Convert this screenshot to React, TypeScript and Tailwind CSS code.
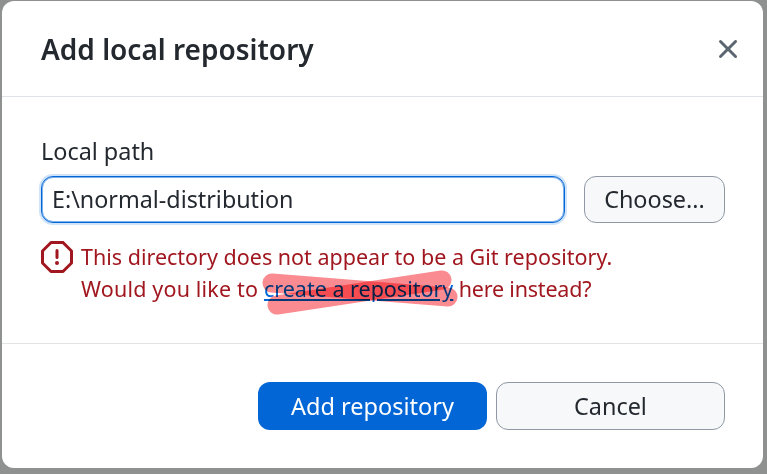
export default function App() {
  return (
    <div className="h-[474px] w-[767px] overflow-hidden bg-[#8f9191] pl-[2px] pt-[1px]" style={{ fontFamily: '"Noto Sans", sans-serif' }}>
      <div className="flex h-[467px] w-[761px] flex-col rounded-[12px] bg-white text-[#24292f]">
        <header className="flex h-[96px] shrink-0 items-center justify-between border-b border-[#dfe2e6] pl-[39px] pr-[19px]">
          <h1 className="text-[28px] font-semibold leading-none">Add local repository</h1>
          <svg width="32" height="32" viewBox="0 0 16 16" fill="#5c6670" aria-hidden="true">
            <path d="M3.72 3.72a.75.75 0 0 1 1.06 0L8 6.94l3.22-3.22a.749.749 0 0 1 1.275.326.749.749 0 0 1-.215.734L9.06 8l3.22 3.22a.749.749 0 0 1-.326 1.275.749.749 0 0 1-.734-.215L8 9.06l-3.22 3.22a.751.751 0 0 1-1.042-.018.751.751 0 0 1-.018-1.042L6.94 8 3.72 4.78a.75.75 0 0 1 0-1.06Z" />
          </svg>
        </header>
        <section className="flex h-[247px] shrink-0 flex-col border-b border-[#e1e3e5] pl-[39px] pr-[38px] pt-[37px]">
          <label className="text-[23.4px] leading-[34px]">Local path</label>
          <div className="mt-[8px] flex gap-[19px]">
            <div className="flex h-[47px] w-[524px] items-center rounded-[12px] border border-[#0366d6] bg-white pl-[10px] pb-[1px] text-[23.3px] shadow-[0_0_0_2px_#cfe3f9,inset_0_0_0_1px_#7fb2ea]">
              E:\normal-distribution
            </div>
            <button className="h-[47px] w-[141px] rounded-[12px] border border-[#8f98a3] bg-[#f6f8fa] text-[23.4px]">Choose...</button>
          </div>
          <div className="relative mt-[18px] flex gap-[8px] text-[21.5px] leading-[32px] text-[#a1171f]">
            <svg className="shrink-0" width="32" height="32" viewBox="0 0 16 16" fill="#a1171f" aria-hidden="true">
              <path d="M4.47.22A.749.749 0 0 1 5 0h6c.199 0 .389.079.53.22l4.25 4.25c.141.14.22.331.22.53v6a.749.749 0 0 1-.22.53l-4.25 4.25A.749.749 0 0 1 11 16H5a.749.749 0 0 1-.53-.22L.22 11.53A.749.749 0 0 1 0 11V5c0-.199.079-.389.22-.53Zm.84 1.28L1.5 5.31v5.38l3.81 3.81h5.38l3.81-3.81V5.31L10.69 1.5ZM8 4a.75.75 0 0 1 .75.75v3.5a.75.75 0 0 1-1.5 0v-3.5A.75.75 0 0 1 8 4Zm0 8a1 1 0 1 1 0-2 1 1 0 0 1 0 2Z" />
            </svg>
            <p>
              This directory does not appear to be a Git repository.
              <br />
              <span className="tracking-[0.18px]">Would you like to </span>
              <a className="text-[#0366d6] underline">create a repository</a>
              <span className="tracking-[-0.2px]"> here instead?</span>
            </p>
            <svg className="pointer-events-none absolute left-[210px] top-[14px] mix-blend-multiply" width="220" height="70" viewBox="0 0 220 70" fill="none" aria-hidden="true">
              <path className="mix-blend-multiply" d="M21 28 L197 42" stroke="#fa8b90" strokeWidth="19" strokeLinecap="round" />
              <path className="mix-blend-multiply" d="M26 50 L191 25" stroke="#fa8b90" strokeWidth="19" strokeLinecap="round" />
            </svg>
          </div>
        </section>
        <footer className="flex justify-end gap-[9px] pr-[38px] pt-[38px]">
          <button className="h-[48px] w-[229px] rounded-[12px] bg-[#0366d6] pt-[1px] text-[23.5px] text-white">Add repository</button>
          <button className="h-[48px] w-[229px] rounded-[12px] border border-[#8f98a3] bg-[#f6f8fa] pt-[1px] text-[23.4px]">Cancel</button>
        </footer>
      </div>
    </div>
  );
}
